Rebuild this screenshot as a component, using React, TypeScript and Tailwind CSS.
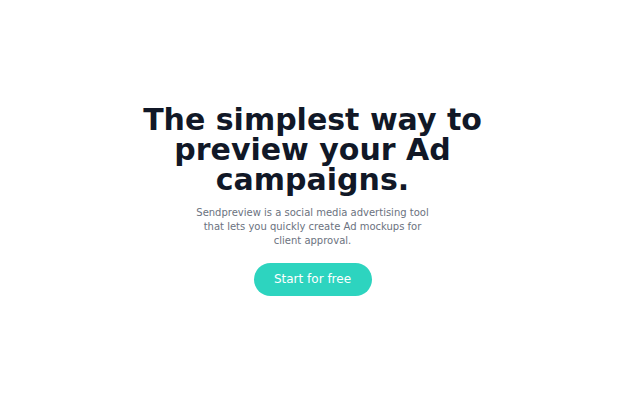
export default function App() {
  return (
    <div
      className="flex h-screen w-full flex-col items-center justify-center bg-white text-center"
      style={{ fontFamily: '"DejaVu Sans", sans-serif' }}
    >
      <h1 className="w-[345px] text-[30px] font-bold leading-[30px] text-[#111827]">
        The simplest way to preview your Ad campaigns.
      </h1>
      <p className="mt-[11px] w-[236px] text-[10px] leading-[14px] text-[#6b7280]">
        Sendpreview is a social media advertising tool that lets you quickly create Ad mockups for client approval.
      </p>
      <button className="mt-[15px] h-[33px] w-[118px] rounded-full bg-[#2dd4bf] text-[12px] text-white">
        Start for free
      </button>
    </div>
  );
}
